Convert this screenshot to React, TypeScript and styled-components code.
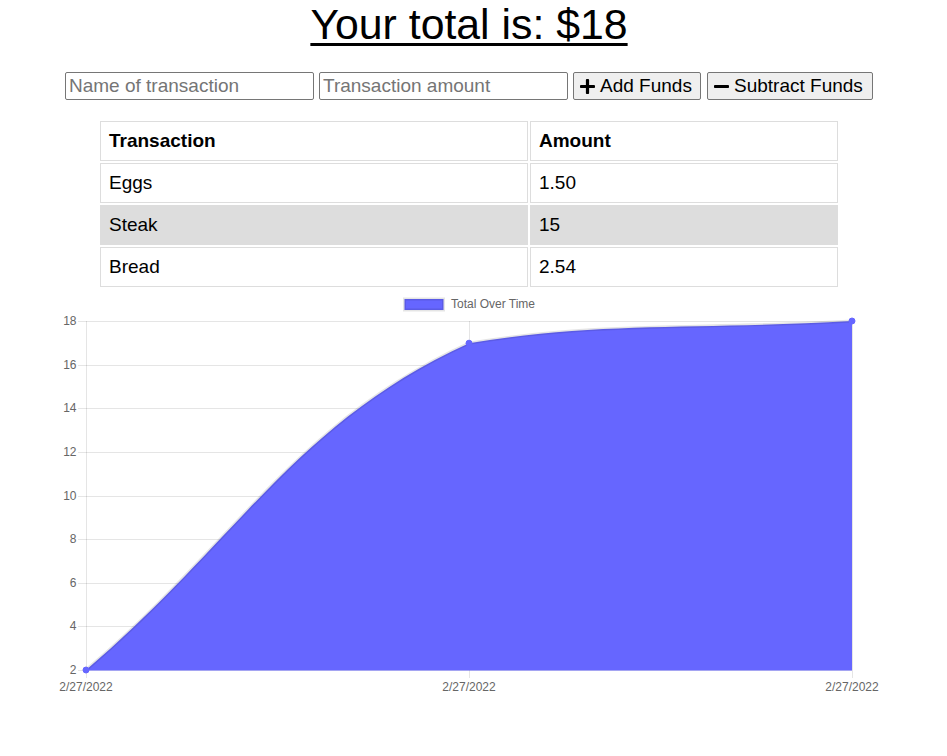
import React from "react";
import styled, { createGlobalStyle } from "styled-components";

const GlobalStyle = createGlobalStyle`
  html, body {
    margin: 0;
    padding: 0;
    background: #ffffff;
    font-family: "Liberation Sans", Arial, sans-serif;
    color: #000;
  }
`;

const Page = styled.div`
  width: 938px;
  display: flex;
  flex-direction: column;
  align-items: center;
`;

const Title = styled.h1`
  margin: 0;
  font-size: 42.8px;
  line-height: normal;
  font-weight: 400;
  text-decoration: underline;
  text-decoration-thickness: 3px;
  text-underline-offset: 4px;
`;

const Form = styled.div`
  margin-top: 23px;
  display: flex;
  align-items: center;
  height: 28px;
`;

const Input = styled.input<{ $gap: number }>`
  box-sizing: border-box;
  width: 249px;
  height: 28px;
  margin-right: ${(p) => p.$gap}px;
  padding: 2px 3px;
  border: 1px solid #767676;
  border-radius: 2px;
  font-family: "Liberation Sans", Arial, sans-serif;
  font-size: 19px;
  color: #000;
  background: #fff;
  outline: none;
  &::placeholder {
    color: #757575;
  }
`;

const Button = styled.button<{ $w: number; $gap?: number }>`
  box-sizing: border-box;
  width: ${(p) => p.$w}px;
  height: 28px;
  margin-right: ${(p) => p.$gap ?? 0}px;
  padding: 0 6px;
  display: flex;
  align-items: center;
  gap: 5px;
  border: 1px solid #767676;
  border-radius: 2px;
  background: #efefef;
  font-family: "Liberation Sans", Arial, sans-serif;
  font-size: 19px;
  color: #000;
  white-space: nowrap;
  cursor: pointer;
`;

const Icon = styled.svg`
  width: 15px;
  height: 15px;
  flex: none;
  margin-top: 1px;
`;

const Table = styled.table`
  margin-top: 19px;
  width: 742px;
  table-layout: fixed;
  border-collapse: separate;
  border-spacing: 2px;
  font-size: 19px;
`;

const Col = styled.col<{ $w: number }>`
  width: ${(p) => p.$w}px;
`;

const Row = styled.tr<{ $shade?: boolean }>`
  background: ${(p) => (p.$shade ? "#dddddd" : "transparent")};
`;

const HeadCell = styled.th`
  box-sizing: border-box;
  height: 40px;
  padding: 0 8px;
  border: 1px solid #dddddd;
  text-align: left;
  font-weight: 700;
`;

const Cell = styled.td`
  box-sizing: border-box;
  height: 40px;
  padding: 0 8px;
  border: 1px solid #dddddd;
  text-align: left;
`;

const ChartBox = styled.div`
  width: 938px;
  height: 411px;
`;

const ChartSvg = styled.svg`
  display: block;
  width: 938px;
  height: 411px;
  font-family: "Liberation Sans", Arial, sans-serif;
`;

const PlusIcon = () => (
  <Icon viewBox="0 32 448 448">
    <path d="M416 208H272V64c0-17.670-14.330-32-32-32h-32c-17.670 0-32 14.330-32 32v144H32c-17.670 0-32 14.330-32 32v32c0 17.670 14.330 32 32 32h144v144c0 17.670 14.330 32 32 32h32c17.670 0 32-14.330 32-32V304h144c17.670 0 32-14.330 32-32v-32c0-17.670-14.330-32-32-32z" />
  </Icon>
);

const MinusIcon = () => (
  <Icon viewBox="0 32 448 448">
    <path d="M416 208H32c-17.670 0-32 14.330-32 32v32c0 17.670 14.330 32 32 32h384c17.670 0 32-14.330 32-32v-32c0-17.670-14.330-32-32-32z" />
  </Icon>
);

const rows = [
  { name: "Eggs", amount: "1.50" },
  { name: "Steak", amount: "15" },
  { name: "Bread", amount: "2.54" },
];

const yOf = (v: number) => 670 - (v - 2) * 21.8125;
const ticks = [2, 4, 6, 8, 10, 12, 14, 16, 18];
const xs = [86, 469, 852];
const curve =
  "M86,670 C239.2,539.3 295.1,422.4 469,343.2 C601.5,321 698.8,329.9 852,321";
const points: [number, number][] = [
  [86, 670],
  [469, 343.2],
  [852, 321],
];

const Chart = () => (
  <ChartBox>
    <ChartSvg viewBox="0 289 938 411">
      <rect x={404.5} y={299} width={39} height={11} fill="#6666ff" stroke="rgba(0,0,0,0.1)" strokeWidth={3} />
      <text x={451} y={308} fontSize={12} fill="#666">
        Total Over Time
      </text>
      {ticks.map((t) => {
        const y = Math.round(yOf(t)) + 0.5;
        return (
          <g key={t}>
            <line x1={78} x2={852} y1={y} y2={y} stroke="rgba(0,0,0,0.1)" strokeWidth={1} />
            <text x={76.5} y={y + 3.5} fontSize={12} fill="#666" textAnchor="end">
              {t}
            </text>
          </g>
        );
      })}
      {xs.map((x) => (
        <g key={x}>
          <line x1={x + 0.5} x2={x + 0.5} y1={321} y2={678} stroke="rgba(0,0,0,0.1)" strokeWidth={1} />
          <text x={x} y={691} fontSize={12} fill="#666" textAnchor="middle">
            2/27/2022
          </text>
        </g>
      ))}
      <path d={`${curve} L852,670.5 L86,670.5 Z`} fill="#6666ff" />
      <path d={curve} fill="none" stroke="rgba(0,0,0,0.1)" strokeWidth={3} />
      {points.map(([x, y]) => (
        <circle key={x} cx={x} cy={y} r={3} fill="#6666ff" stroke="#6666ff" strokeWidth={1} />
      ))}
    </ChartSvg>
  </ChartBox>
);

export default function App() {
  return (
    <Page>
      <GlobalStyle />
      <Title>Your total is: $18</Title>
      <Form>
        <Input $gap={5} type="text" placeholder="Name of transaction" />
        <Input $gap={5} type="number" placeholder="Transaction amount" />
        <Button $w={128} $gap={6}>
          <PlusIcon />
          Add Funds
        </Button>
        <Button $w={166}>
          <MinusIcon />
          Subtract Funds
        </Button>
      </Form>
      <Table>
        <colgroup>
          <Col $w={428} />
          <Col $w={308} />
        </colgroup>
        <thead>
          <Row>
            <HeadCell>Transaction</HeadCell>
            <HeadCell>Amount</HeadCell>
          </Row>
        </thead>
        <tbody>
          {rows.map((r, i) => (
            <Row key={r.name} $shade={i === 1}>
              <Cell>{r.name}</Cell>
              <Cell>{r.amount}</Cell>
            </Row>
          ))}
        </tbody>
      </Table>
      <Chart />
    </Page>
  );
}
